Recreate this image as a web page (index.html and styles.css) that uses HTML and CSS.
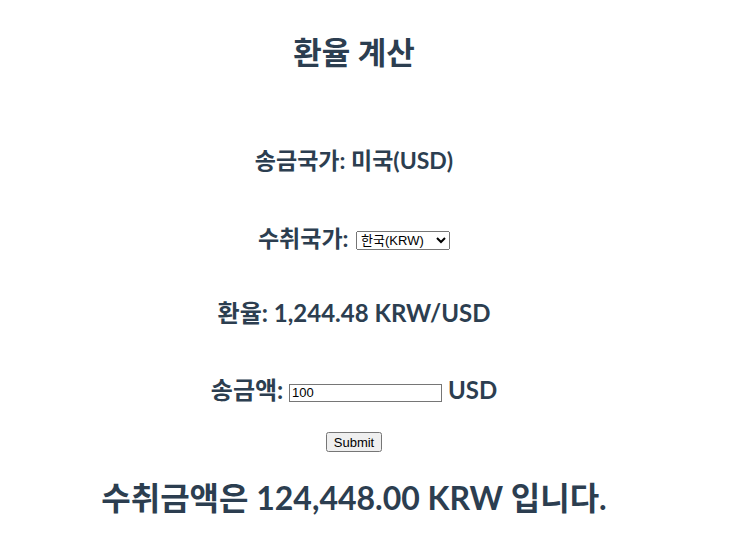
FILE: index.html
```html
<!DOCTYPE html>
<html lang="ko">
<head>
  <meta charset="UTF-8" />
  <meta name="viewport" content="width=device-width, initial-scale=1.0"/>
  <title>환율 계산</title>
  <link rel="stylesheet" href="styles.css">
</head>
<body>

  <div id="app">
    <h1 class="title">환율 계산</h1>

    <h3 class="row">송금국가: 미국(USD)</h3>

    <h3 class="row row-select">수취국가:
      <select id="country">
        <option value="KRW">한국(KRW)</option>
        <option value="JPY">일본(JPY)</option>
        <option value="PHP">필리핀(PHP)</option>
      </select>
    </h3>

    <h3 class="row row-rate">환율: 1,244.48 KRW/USD</h3>

    <h3 class="row row-amount">송금액: <input type="text" id="amount" value="100"> USD</h3>

    <button class="submit-btn">Submit</button>

    <h2 class="result">수취금액은 124,448.00 KRW 입니다.</h2>
  </div>

</body>
</html>
```

FILE: styles.css
```css
body {
  margin: 0;
  background-color: #fff;
}

#app {
  width: 708px;
  font-family: Lato, "Noto Sans CJK KR", sans-serif;
  text-align: center;
  color: #2c3e50;
}

.title {
  margin: 33px 0 0;
  font-size: 31px;
  line-height: 38px;
  font-weight: bold;
}

.row {
  margin: 0;
  font-size: 23px;
  line-height: 30px;
  font-weight: bold;
}

.title + .row {
  margin-top: 74px;
}

.row-select {
  margin-top: 48px;
}

.row-rate {
  margin-top: 45px;
}

.row-amount {
  margin-top: 47px;
}

.row-rate,
.row-amount {
  font-size: 24px;
}

select {
  font-family: "Liberation Sans", "Noto Sans CJK KR", sans-serif;
  font-size: 13px;
  height: 19px;
  margin-left: 2px;
  vertical-align: 2px;
}

input {
  font-family: "Liberation Sans", sans-serif;
  font-size: 13px;
  width: 147px;
  height: 14px;
  padding: 1px 2px;
  border: 1px solid #767676;
  vertical-align: 2px;
}

.submit-btn {
  display: block;
  margin: 27px auto 0;
  font-family: "Liberation Sans", sans-serif;
  font-size: 13px;
  height: 20px;
  padding: 1px 6px;
}

.result {
  margin: 25px 0 0;
  font-size: 32px;
  line-height: 42px;
  font-weight: bold;
}
```
